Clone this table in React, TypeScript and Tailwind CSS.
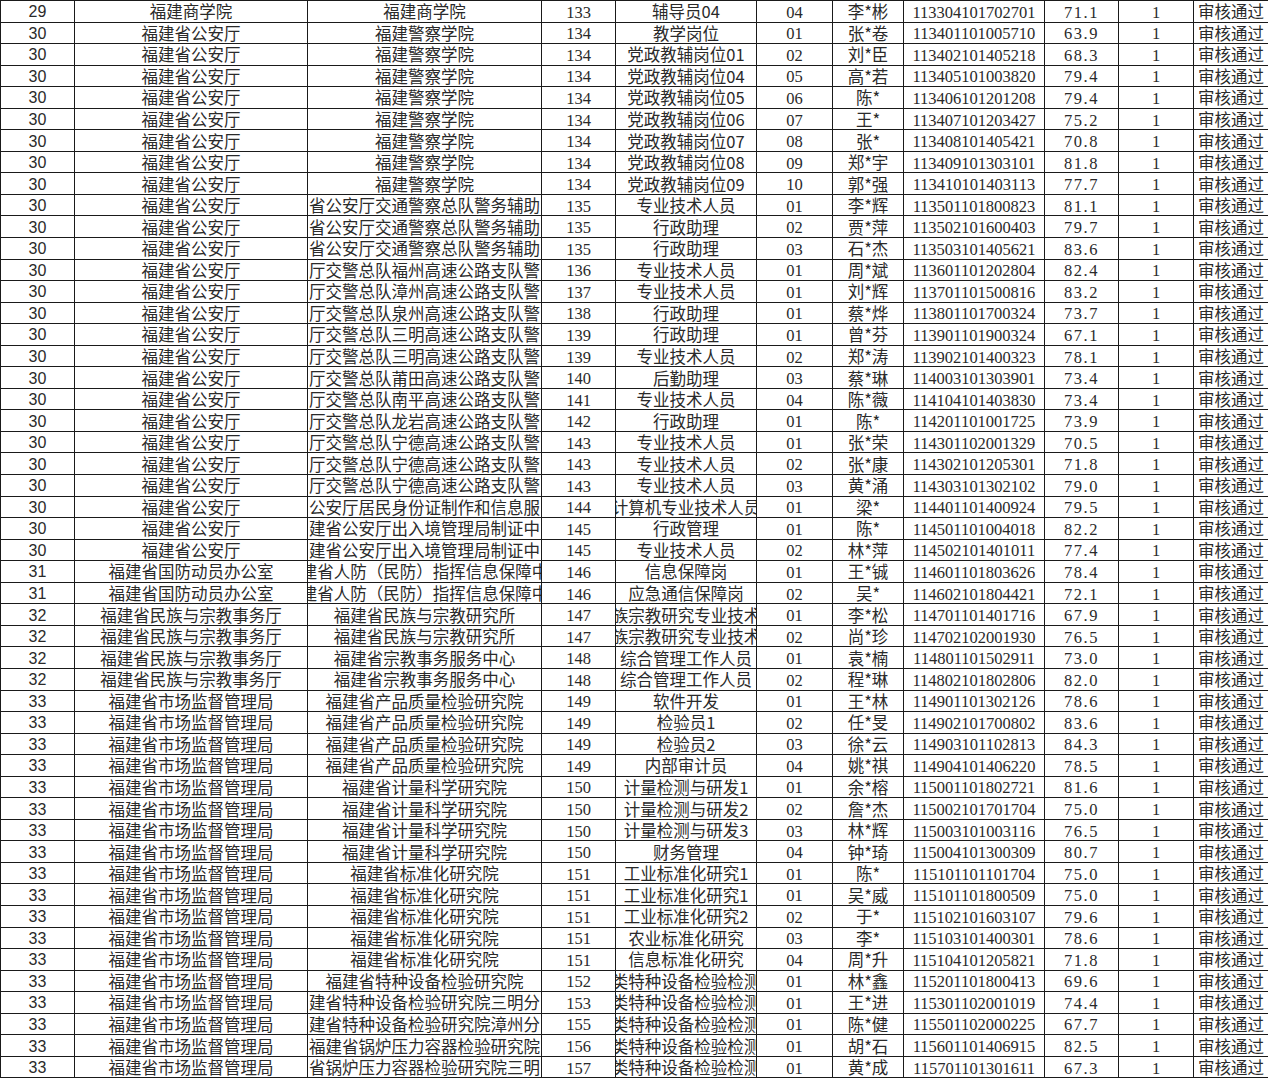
const rows: string[] = [
  "29|福建商学院|福建商学院|133|辅导员04|04|李*彬|113304101702701|71.1",
  "30|福建省公安厅|福建警察学院|134|教学岗位|01|张*卷|113401101005710|63.9",
  "30|福建省公安厅|福建警察学院|134|党政教辅岗位01|02|刘*臣|113402101405218|68.3",
  "30|福建省公安厅|福建警察学院|134|党政教辅岗位04|05|高*若|113405101003820|79.4",
  "30|福建省公安厅|福建警察学院|134|党政教辅岗位05|06|陈*|113406101201208|79.4",
  "30|福建省公安厅|福建警察学院|134|党政教辅岗位06|07|王*|113407101203427|75.2",
  "30|福建省公安厅|福建警察学院|134|党政教辅岗位07|08|张*|113408101405421|70.8",
  "30|福建省公安厅|福建警察学院|134|党政教辅岗位08|09|郑*宇|113409101303101|81.8",
  "30|福建省公安厅|福建警察学院|134|党政教辅岗位09|10|郭*强|113410101403113|77.7",
  "30|福建省公安厅|省公安厅交通警察总队警务辅助|135|专业技术人员|01|李*辉|113501101800823|81.1",
  "30|福建省公安厅|省公安厅交通警察总队警务辅助|135|行政助理|02|贾*萍|113502101600403|79.7",
  "30|福建省公安厅|省公安厅交通警察总队警务辅助|135|行政助理|03|石*杰|113503101405621|83.6",
  "30|福建省公安厅|厅交警总队福州高速公路支队警|136|专业技术人员|01|周*斌|113601101202804|82.4",
  "30|福建省公安厅|厅交警总队漳州高速公路支队警|137|专业技术人员|01|刘*辉|113701101500816|83.2",
  "30|福建省公安厅|厅交警总队泉州高速公路支队警|138|行政助理|01|蔡*烨|113801101700324|73.7",
  "30|福建省公安厅|厅交警总队三明高速公路支队警|139|行政助理|01|曾*芬|113901101900324|67.1",
  "30|福建省公安厅|厅交警总队三明高速公路支队警|139|专业技术人员|02|郑*涛|113902101400323|78.1",
  "30|福建省公安厅|厅交警总队莆田高速公路支队警|140|后勤助理|03|蔡*琳|114003101303901|73.4",
  "30|福建省公安厅|厅交警总队南平高速公路支队警|141|专业技术人员|04|陈*薇|114104101403830|73.4",
  "30|福建省公安厅|厅交警总队龙岩高速公路支队警|142|行政助理|01|陈*|114201101001725|73.9",
  "30|福建省公安厅|厅交警总队宁德高速公路支队警|143|专业技术人员|01|张*荣|114301102001329|70.5",
  "30|福建省公安厅|厅交警总队宁德高速公路支队警|143|专业技术人员|02|张*康|114302101205301|71.8",
  "30|福建省公安厅|厅交警总队宁德高速公路支队警|143|专业技术人员|03|黄*涌|114303101302102|79.0",
  "30|福建省公安厅|公安厅居民身份证制作和信息服|144|计算机专业技术人员|01|梁*|114401101400924|79.5",
  "30|福建省公安厅|建省公安厅出入境管理局制证中|145|行政管理|01|陈*|114501101004018|82.2",
  "30|福建省公安厅|建省公安厅出入境管理局制证中|145|专业技术人员|02|林*萍|114502101401011|77.4",
  "31|福建省国防动员办公室|建省人防（民防）指挥信息保障中|146|信息保障岗|01|王*铖|114601101803626|78.4",
  "31|福建省国防动员办公室|建省人防（民防）指挥信息保障中|146|应急通信保障岗|02|吴*|114602101804421|72.1",
  "32|福建省民族与宗教事务厅|福建省民族与宗教研究所|147|族宗教研究专业技术|01|李*松|114701101401716|67.9",
  "32|福建省民族与宗教事务厅|福建省民族与宗教研究所|147|族宗教研究专业技术|02|尚*珍|114702102001930|76.5",
  "32|福建省民族与宗教事务厅|福建省宗教事务服务中心|148|综合管理工作人员|01|袁*楠|114801101502911|73.0",
  "32|福建省民族与宗教事务厅|福建省宗教事务服务中心|148|综合管理工作人员|02|程*琳|114802101802806|82.0",
  "33|福建省市场监督管理局|福建省产品质量检验研究院|149|软件开发|01|王*林|114901101302126|78.6",
  "33|福建省市场监督管理局|福建省产品质量检验研究院|149|检验员1|02|任*旻|114902101700802|83.6",
  "33|福建省市场监督管理局|福建省产品质量检验研究院|149|检验员2|03|徐*云|114903101102813|84.3",
  "33|福建省市场监督管理局|福建省产品质量检验研究院|149|内部审计员|04|姚*祺|114904101406220|78.5",
  "33|福建省市场监督管理局|福建省计量科学研究院|150|计量检测与研发1|01|余*榕|115001101802721|81.6",
  "33|福建省市场监督管理局|福建省计量科学研究院|150|计量检测与研发2|02|詹*杰|115002101701704|75.0",
  "33|福建省市场监督管理局|福建省计量科学研究院|150|计量检测与研发3|03|林*辉|115003101003116|76.5",
  "33|福建省市场监督管理局|福建省计量科学研究院|150|财务管理|04|钟*琦|115004101300309|80.7",
  "33|福建省市场监督管理局|福建省标准化研究院|151|工业标准化研究1|01|陈*|115101101101704|75.0",
  "33|福建省市场监督管理局|福建省标准化研究院|151|工业标准化研究1|01|吴*威|115101101800509|75.0",
  "33|福建省市场监督管理局|福建省标准化研究院|151|工业标准化研究2|02|于*|115102101603107|79.6",
  "33|福建省市场监督管理局|福建省标准化研究院|151|农业标准化研究|03|李*|115103101400301|78.6",
  "33|福建省市场监督管理局|福建省标准化研究院|151|信息标准化研究|04|周*升|115104101205821|71.8",
  "33|福建省市场监督管理局|福建省特种设备检验研究院|152|类特种设备检验检测|01|林*鑫|115201101800413|69.6",
  "33|福建省市场监督管理局|建省特种设备检验研究院三明分|153|类特种设备检验检测|01|王*进|115301102001019|74.4",
  "33|福建省市场监督管理局|建省特种设备检验研究院漳州分|155|类特种设备检验检测|01|陈*健|115501102000225|67.7",
  "33|福建省市场监督管理局|福建省锅炉压力容器检验研究院|156|类特种设备检验检测|01|胡*石|115601101406915|82.5",
  "33|福建省市场监督管理局|省锅炉压力容器检验研究院三明|157|类特种设备检验检测|01|黄*成|115701101301611|67.3",
];

const cjk = "font-['Noto_Sans_CJK_SC',sans-serif] text-[16.5px]";
const serif = "font-['Liberation_Serif',serif] text-[16.5px] pt-[3px]";
const sans = "font-['Liberation_Sans',sans-serif] text-[16px] pt-[2px]";

function Cell({ children, font, extra = "" }: { children: React.ReactNode; font: string; extra?: string }) {
  return (
    <td className="border border-[#1a1a1a] p-0">
      <div className={`flex h-[20.5px] items-center justify-center overflow-x-clip whitespace-nowrap leading-[20px] text-[#2a2a2a] ${font} ${extra}`}>
        {children}
      </div>
    </td>
  );
}

export default function App() {
  return (
    <div className="h-[1080px] w-[1268px] overflow-hidden bg-white">
      <table className="w-[1268px] table-fixed border-collapse">
        <colgroup>
          <col className="w-[74px]" />
          <col className="w-[233px]" />
          <col className="w-[234px]" />
          <col className="w-[74px]" />
          <col className="w-[141px]" />
          <col className="w-[76px]" />
          <col className="w-[71px]" />
          <col className="w-[141px]" />
          <col className="w-[74px]" />
          <col className="w-[75px]" />
          <col className="w-[75px]" />
        </colgroup>
        <tbody>
          {rows.map((r, i) => {
            const c = r.split("|");
            return (
              <tr key={i} className="h-[21.56px]">
                <Cell font={sans}>{c[0]}</Cell>
                <Cell font={cjk}>{c[1]}</Cell>
                <Cell font={cjk}>{c[2]}</Cell>
                <Cell font={serif}>{c[3]}</Cell>
                <Cell font={cjk}>{c[4]}</Cell>
                <Cell font={serif}>{c[5]}</Cell>
                <Cell font={cjk}>{c[6]}</Cell>
                <Cell font={serif}>{c[7]}</Cell>
                <Cell font={serif} extra="tracking-[1.5px]">{c[8]}</Cell>
                <Cell font={serif}>1</Cell>
                <Cell font={cjk} extra="text-[15px]">审核通过</Cell>
              </tr>
            );
          })}
        </tbody>
      </table>
    </div>
  );
}
